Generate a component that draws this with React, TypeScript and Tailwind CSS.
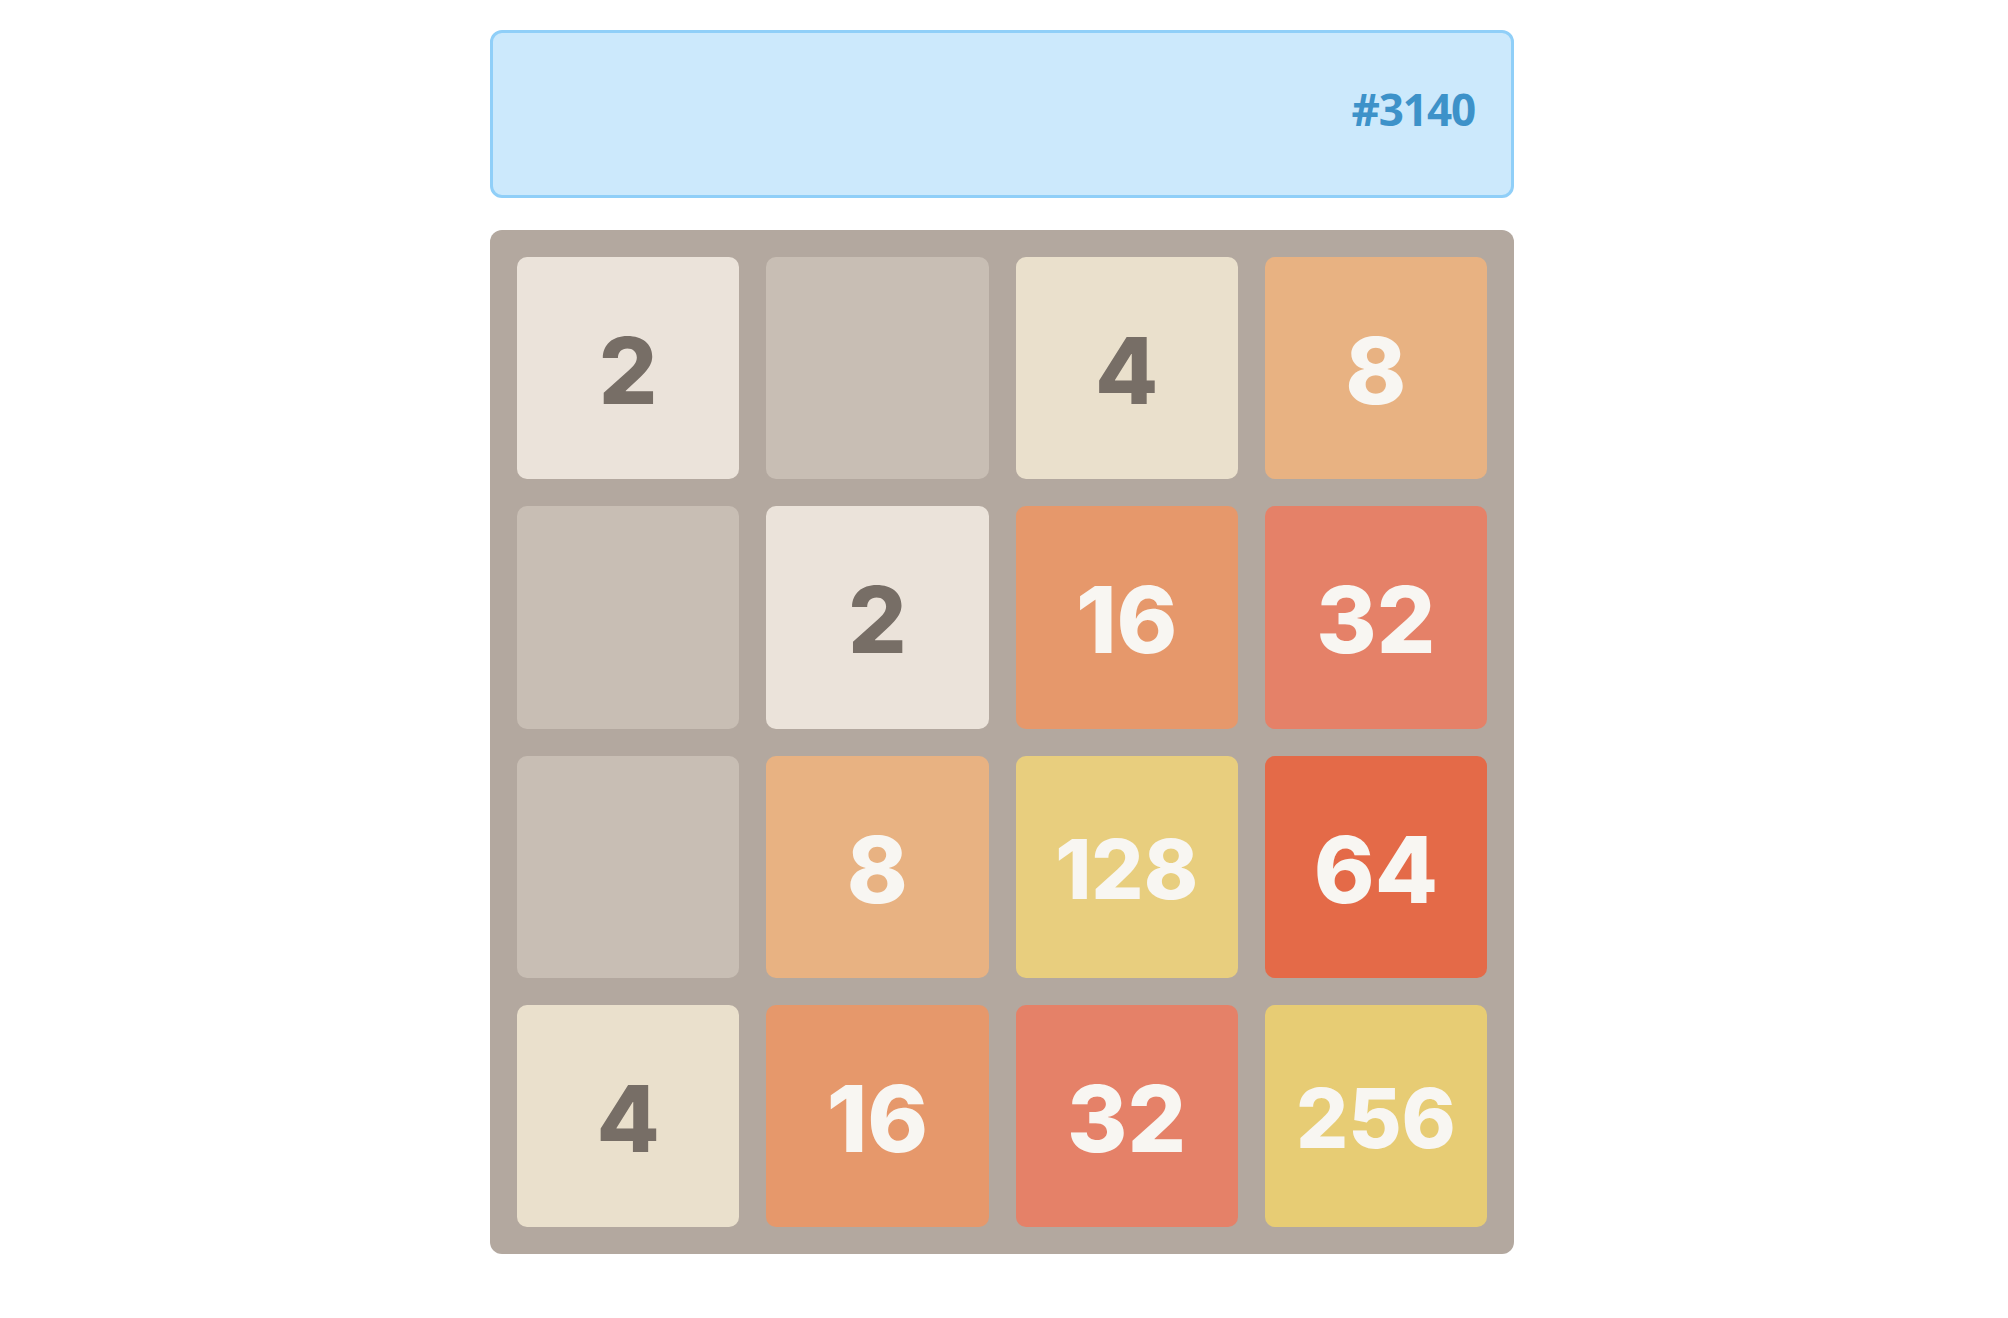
import React from 'react';

type Cell = number | null;

const board: Cell[][] = [
  [2, null, 4, 8],
  [null, 2, 16, 32],
  [null, 8, 128, 64],
  [4, 16, 32, 256],
];

// Tile styles keyed by value, written out so Tailwind picks them up
const tileStyles: Record<number, string> = {
  2: 'bg-[#ebe3da] text-[#776e66]',
  4: 'bg-[#eae0cc] text-[#776e66]',
  8: 'bg-[#e8b282] text-[#f8f6f2]',
  16: 'bg-[#e6986b] text-[#f8f6f2]',
  32: 'bg-[#e58168] text-[#f8f6f2]',
  64: 'bg-[#e46a48] text-[#f8f6f2]',
  128: 'bg-[#e8ce7e] text-[#f8f6f2]',
  256: 'bg-[#e7cc74] text-[#f8f6f2]',
};

const Tile: React.FC<{ value: Cell }> = ({ value }) => {
  if (value === null) {
    return <div className="aspect-square rounded-[10px] bg-[#c8beb4]" />;
  }
  const size = value >= 100 ? 'text-[82px]' : 'text-[92px]';
  return (
    <div
      className={`flex aspect-square items-center justify-center rounded-[10px] pt-[6px] font-extrabold leading-none ${tileStyles[value]} ${size}`}
      style={{ fontFamily: 'Inter, "Liberation Sans", sans-serif' }}
    >
      {value}
    </div>
  );
};

export default function App() {
  return (
    <div className="min-h-[1318px] bg-white pr-1 pt-[30px]">
      <div className="mx-auto flex w-[1024px] flex-col gap-[32px]">
        <div className="flex h-[168px] items-center justify-end rounded-[12px] border-[3px] border-[#90cff8] bg-[#cce9fc] pb-[11px] pr-[36px]">
          <span
            className="text-[44px] font-bold tracking-tight text-[#3d92c9]"
            style={{ fontFamily: '"Open Sans", "Noto Sans", sans-serif' }}
          >
            #3140
          </span>
        </div>
        <div className="grid grid-cols-4 gap-[27px] rounded-[12px] bg-[#b3a89f] p-[27px]">
          {board.flat().map((v, i) => (
            <Tile key={i} value={v} />
          ))}
        </div>
      </div>
    </div>
  );
}
